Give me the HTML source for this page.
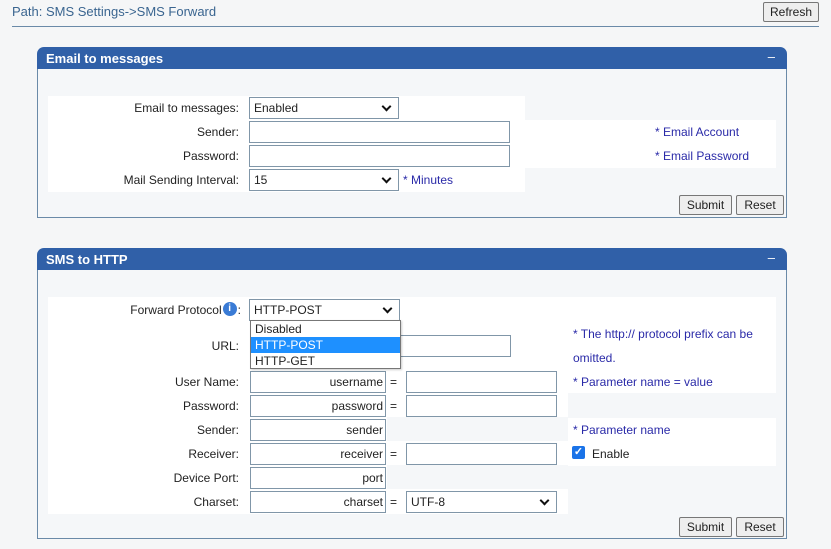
<!DOCTYPE html>
<html><head><style>
body{margin:0;width:831px;height:549px;background:#f5f6f7;font-family:"Liberation Sans",Arial,sans-serif;font-size:12px;color:#222;position:relative;overflow:hidden}
.a{position:absolute}
.hdr{position:absolute;left:37px;width:750px;height:22px;background:#3060a8;border-radius:7px 7px 0 0;color:#fff;font-weight:bold;font-size:13px;line-height:23px;box-sizing:border-box;padding-left:9px}
.hdr span{position:absolute;right:12px;top:-2px;font-weight:normal}
.body{position:absolute;left:37px;width:750px;border:1px solid #6a8aa8;border-top:none;box-sizing:border-box;background:#f5f7f9}
.w{position:absolute;background:#fff}
.lbl{position:absolute;text-align:right;width:200px;line-height:22px;margin-top:1px}
.in{position:absolute;height:22px;border:1px solid #8096a8;box-sizing:border-box;background:#fff;line-height:21px;padding:0 4px}
.r{text-align:right;padding-right:2px}
.sel::after{content:"";position:absolute;right:8px;top:5px;width:5px;height:5px;border-right:2px solid #111;border-bottom:2px solid #111;transform:rotate(45deg)}
.note{position:absolute;color:#2a2aa8;line-height:22px;margin-top:1px}
.btn{position:absolute;height:20px;border:1px solid #777;border-radius:2px;background:#eee;box-sizing:border-box;font-size:12px;line-height:18px;text-align:center}
</style></head><body>
<div class="a" style="left:12px;top:4px;color:#3a6590;font-size:13px">Path: SMS Settings-&gt;SMS Forward</div>
<div class="a" style="left:12px;top:26px;width:807px;height:1px;background:#6a8aa8"></div>
<div class="btn" style="left:763px;top:2px;width:56px">Refresh</div>

<div class="hdr" style="top:47px">Email to messages<span>–</span></div>
<div class="body" style="top:69px;height:149px"></div>
<div class="w" style="left:48px;top:96px;width:477px;height:96px"></div>
<div class="w" style="left:525px;top:120px;width:251px;height:48px"></div>
<div class="lbl" style="left:39px;top:96px">Email to messages:</div>
<div class="lbl" style="left:39px;top:120px">Sender:</div>
<div class="lbl" style="left:39px;top:144px">Password:</div>
<div class="lbl" style="left:39px;top:168px">Mail Sending Interval:</div>
<div class="in sel" style="left:249px;top:97px;width:150px">Enabled</div>
<div class="in" style="left:249px;top:121px;width:261px"></div>
<div class="in" style="left:249px;top:145px;width:261px"></div>
<div class="in sel" style="left:249px;top:169px;width:150px">15</div>
<div class="note" style="left:403px;top:168px">* Minutes</div>
<div class="note" style="left:655px;top:120px">* Email Account</div>
<div class="note" style="left:655px;top:144px">* Email Password</div>
<div class="btn" style="left:679px;top:195px;width:53px">Submit</div>
<div class="btn" style="left:736px;top:195px;width:48px">Reset</div>

<div class="hdr" style="top:248px">SMS to HTTP<span>–</span></div>
<div class="body" style="top:270px;height:269px"></div>
<div class="w" style="left:48px;top:297px;width:520px;height:217px"></div>
<div class="a" style="left:387px;top:417px;width:181px;height:24px;background:#f5f7f9"></div>
<div class="a" style="left:387px;top:465px;width:181px;height:24px;background:#f5f7f9"></div>
<div class="w" style="left:568px;top:297px;width:208px;height:96px"></div>
<div class="w" style="left:568px;top:418px;width:208px;height:48px"></div>
<div class="lbl" style="left:41px;top:298px">Forward Protocol<span style="display:inline-block;width:14px;height:14px;border-radius:50%;background:#3a7bd5;color:#fff;font-size:10px;line-height:14px;text-align:center;font-weight:bold;vertical-align:3px;margin:0 1px">i</span>:</div>
<div class="lbl" style="left:39px;top:334px">URL:</div>
<div class="lbl" style="left:39px;top:370px">User Name:</div>
<div class="lbl" style="left:39px;top:394px">Password:</div>
<div class="lbl" style="left:39px;top:418px">Sender:</div>
<div class="lbl" style="left:39px;top:442px">Receiver:</div>
<div class="lbl" style="left:39px;top:466px">Device Port:</div>
<div class="lbl" style="left:39px;top:490px">Charset:</div>
<div class="in sel" style="left:249px;top:299px;width:151px">HTTP-POST</div>
<div class="in" style="left:390px;top:335px;width:121px"></div>
<div class="in r" style="left:250px;top:371px;width:136px">username</div>
<div class="in r" style="left:250px;top:395px;width:136px">password</div>
<div class="in r" style="left:250px;top:419px;width:136px">sender</div>
<div class="in r" style="left:250px;top:443px;width:136px">receiver</div>
<div class="in r" style="left:250px;top:467px;width:136px">port</div>
<div class="in r" style="left:250px;top:491px;width:136px">charset</div>
<div class="a" style="left:390px;top:375px">=</div>
<div class="a" style="left:390px;top:399px">=</div>
<div class="a" style="left:390px;top:447px">=</div>
<div class="a" style="left:390px;top:495px">=</div>
<div class="in" style="left:406px;top:371px;width:151px"></div>
<div class="in" style="left:406px;top:395px;width:151px"></div>
<div class="in" style="left:406px;top:443px;width:151px"></div>
<div class="in sel" style="left:406px;top:491px;width:151px">UTF-8</div>
<div class="a" style="left:250px;top:320px;width:151px;height:49px;border:1px solid #777;box-sizing:border-box;background:#fff;line-height:16px;font-size:12px;box-shadow:1px 1px 2px rgba(0,0,0,.2)">
<div style="padding-left:4px">Disabled</div><div style="padding-left:4px;background:#1e90ff;color:#fff">HTTP-POST</div><div style="padding-left:4px">HTTP-GET</div></div>
<div class="note" style="left:573px;top:322px">* The http:// protocol prefix can be</div>
<div class="note" style="left:573px;top:346px">omitted.</div>
<div class="note" style="left:573px;top:370px">* Parameter name = value</div>
<div class="note" style="left:573px;top:418px">* Parameter name</div>
<div class="a" style="left:572px;top:446px;width:13px;height:13px;background:#1a73e8;border-radius:2px;color:#fff;font-size:11px;line-height:13px;text-align:center;font-weight:bold">✓</div>
<div class="a" style="left:592px;top:447px">Enable</div>
<div class="btn" style="left:679px;top:517px;width:53px">Submit</div>
<div class="btn" style="left:736px;top:517px;width:48px">Reset</div>
</body></html>
